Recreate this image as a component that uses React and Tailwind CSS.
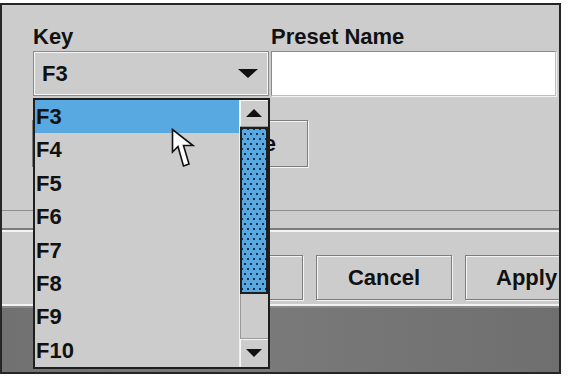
import React from 'react';

const keys = ['F3', 'F4', 'F5', 'F6', 'F7', 'F8', 'F9', 'F10'];

const font = "font-['Liberation_Sans',Arial,sans-serif] font-bold text-[22px] text-[#111]";

const Arrow = ({ up }) => (
  <svg width="16" height="8" viewBox="0 0 16 8">
    {up ? <path d="M0 8 L8 0 L16 8 Z" fill="#111" /> : <path d="M0 0 L16 0 L8 8 Z" fill="#111" />}
  </svg>
);

const MetalButton = ({ className = '', children }) => (
  <div
    className={`flex items-center shrink-0 border border-[#7d7d7d] shadow-[inset_1px_1px_0_#f4f4f4,1px_1px_0_#f4f4f4] ${className}`}
  >
    {children}
  </div>
);

const App = () => {
  return (
    <div className={`relative w-[571px] h-[383px] bg-white overflow-hidden ${font}`}>
      <div className="mt-[3px] w-[561px] h-[371px] border-2 border-[#262626] bg-[#cccccc] flex flex-col overflow-hidden">
        {/* form */}
        <div className="pt-[19px] pl-[31px] flex gap-[2px]">
          <div className="w-[236px] flex flex-col">
            <div className="h-[27px] leading-[25px]">Key</div>
            <div className="h-[45px] border border-[#8a8a8a] shadow-[inset_1px_1px_0_#f6f6f6,inset_-1px_-1px_0_#f6f6f6] flex items-center justify-between pl-[8px] pr-[10px]">
              <span>F3</span>
              <svg width="20" height="9" viewBox="0 0 20 9">
                <path d="M0 0 L20 0 L10 9 Z" fill="#111" />
              </svg>
            </div>
          </div>
          <div className="w-[285px] flex flex-col">
            <div className="h-[27px] leading-[25px]">Preset Name</div>
            <div className="h-[45px] bg-white border border-[#8a8a8a] border-b-[#bdbdbd] border-r-[#bdbdbd] shadow-[1px_1px_0_#f2f2f2]" />
          </div>
        </div>

        <div className="mt-[24px] pl-[30px]">
          <MetalButton className="w-[276px] h-[47px] justify-end pr-[31px]">Delete</MetalButton>
        </div>

        {/* separators */}
        <div className="mt-[43px] h-px bg-[#8e8e8e]" />
        <div className="mt-[17px] h-[2px] bg-[#7c7c7c]" />
        <div className="h-[2px] bg-[#f4f4f4]" />

        {/* dialog buttons */}
        <div className="mt-[23px] flex gap-[13px] pl-[168px]">
          <MetalButton className="w-[133px] h-[45px] justify-center">OK</MetalButton>
          <MetalButton className="w-[136px] h-[45px] justify-center">Cancel</MetalButton>
          <MetalButton className="w-[136px] h-[45px] justify-start pl-[30px]">Apply</MetalButton>
        </div>

        <div className="mt-[4px] h-[2px] bg-[#f2f2f2]" />
        <div className="h-[2px] bg-[#8a8a8a]" />
        <div className="flex-1 bg-[linear-gradient(90deg,#717171,#7a7a7a_45%,#6f6f6f)]" />
      </div>

      {/* combo popup */}
      <div className="absolute left-[33px] top-[98px] w-[237px] h-[271px] border-2 border-[#1e1e1e] bg-[#cccccc] flex">
        <div className="flex-1 flex flex-col">
          {keys.map((k, i) => (
            <div
              key={k}
              className={`h-[33.4px] leading-[33px] pl-[1px] ${i === 0 ? 'bg-[#58a9e1]' : ''}`}
            >
              {k}
            </div>
          ))}
        </div>
        <div className="w-[29px] flex flex-col border-l border-[#eeeeee]">
          <div className="h-[27px] flex items-center justify-center shadow-[inset_1px_1px_0_#f6f6f6] border-b border-[#999]">
            <Arrow up />
          </div>
          <div className="h-[167px] border-2 border-[#1e1e1e] bg-[#58a9e1] bg-[radial-gradient(circle,#173049_0.9px,transparent_1.3px),radial-gradient(circle,#173049_0.9px,transparent_1.3px)] [background-size:6px_10px] [background-position:0_0,3px_5px]" />
          <div className="flex-1 border-l border-[#9a9a9a]" />
          <div className="h-[29px] flex items-center justify-center border-t border-[#999] shadow-[inset_1px_1px_0_#f6f6f6]">
            <Arrow />
          </div>
        </div>
      </div>

      {/* mouse pointer */}
      <svg className="absolute left-[171px] top-[128px]" width="26" height="42" viewBox="0 0 26 42">
        <path
          d="M1.5 1.5 L1.5 24 L7 18.5 L12.5 38 L18 36 L12.5 17.5 L22 17.5 Z"
          fill="#fff"
          stroke="#111"
          strokeWidth="1.6"
          strokeLinejoin="miter"
        />
      </svg>
    </div>
  );
};

export default App;
